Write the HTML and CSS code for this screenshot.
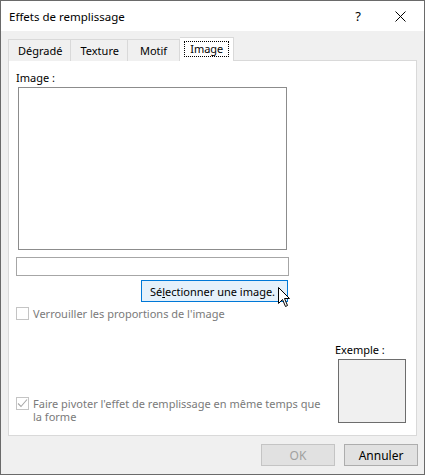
FILE: index.html
```html
<!DOCTYPE html>
<html lang="fr">

<head>
    <meta charset="UTF-8">
    <title>Effets de remplissage</title>
    <link rel="stylesheet" href="styles.css">
</head>

<body>
    <div class="dialog">
        <div class="titlebar">
            <span class="title">Effets de remplissage</span>
            <span class="help">?</span>
            <svg class="close" width="11" height="11" viewBox="0 0 11 11">
                <path d="M0.5 0.5 L10.5 10.5 M10.5 0.5 L0.5 10.5" stroke="#000" stroke-width="1" fill="none" />
            </svg>
        </div>

        <div class="body">
            <div class="tabs">
                <div class="tab tab-first">Dégradé</div>
                <div class="tab">Texture</div>
                <div class="tab tab-wide">Motif</div>
                <div class="tab active"><span class="focus">Image</span></div>
            </div>

            <div class="panel">
                <div class="label">Image :</div>
                <div class="picture"></div>
                <div class="left-col">
                    <div class="field"></div>
                    <div class="pick-row">
                        <div class="pick-btn">Sé<u>l</u>ectionner une image.</div>
                    </div>
                    <div class="check disabled">
                        <span class="box"></span>
                        <span>Verrouiller les proportions de l'image</span>
                    </div>
                </div>

                <div class="bottom-row">
                    <div class="check disabled rotate">
                        <span class="box">
                            <svg width="11" height="11" viewBox="0 0 11 11">
                                <path d="M1 5.5 L4 8.5 L10 1.5" stroke="#a8a8a8" stroke-width="1.1" fill="none" />
                            </svg>
                        </span>
                        <span>Faire pivoter l'effet de remplissage en même temps que la forme</span>
                    </div>
                    <div class="sample">
                        <div class="sample-label">Exemple :</div>
                        <div class="sample-box"></div>
                    </div>
                </div>

                <!-- mouse pointer over the select button -->
                <svg class="pointer" width="13" height="21" viewBox="0 0 13 21">
                    <path d="M0.5 0.5 L0.5 16.5 L4.5 12.5 L7.5 19.5 L9.5 18.5 L6.5 11.5 L11.5 11.5 Z" fill="#fff" stroke="#000" stroke-width="1" />
                </svg>
            </div>

            <div class="footer">
                <div class="btn btn-disabled">OK</div>
                <div class="btn">Annuler</div>
            </div>
        </div>
    </div>
</body>

</html>
```

FILE: styles.css
```css
* {
    box-sizing: border-box;
    margin: 0;
    font-family: "Noto Sans", "Open Sans", sans-serif;
}

body {
    background: #ffffff;
}

.dialog {
    width: 425px;
    height: 475px;
    border: 1px solid #6a6a6a;
    display: flex;
    flex-direction: column;
    font-size: 11px;
    color: #000;
}

.titlebar {
    height: 30px;
    background: #fff;
    display: flex;
    align-items: center;
    padding-left: 8px;
}

.title {
    font-size: 11.5px;
    flex: 1;
}

.help {
    font-size: 13px;
    margin-right: 34px;
}

.close {
    margin-right: 18px;
}

.body {
    flex: 1;
    background: #f0f0f0;
    padding: 6px 6px 0 7px;
    display: flex;
    flex-direction: column;
}

.tabs {
    display: flex;
    align-items: flex-end;
    height: 24px;
    margin-bottom: -1px;
    position: relative;
    z-index: 1;
}

.tab {
    height: 22px;
    border: 1px solid #d9d9d9;
    border-left: none;
    border-bottom: none;
    background: #f0f0f0;
    padding: 0 8px 0 9px;
    display: flex;
    align-items: center;
}

.tab-first {
    border-left: 1px solid #d9d9d9;
}

.tab-wide {
    padding: 0 12px;
}

.tab.active {
    height: 24px;
    background: #fff;
    padding: 0 4px 2px 4px;
}

.focus {
    border: 1px dotted #000;
    padding: 0 5px;
    line-height: 14px;
}

.panel {
    height: 376px;
    background: #fff;
    border: 1px solid #d9d9d9;
    padding: 9px 0 12px 7px;
    display: flex;
    flex-direction: column;
    position: relative;
    width: 409px;
}

.label {
    line-height: 15px;
}

.picture {
    width: 269px;
    height: 163px;
    border: 1px solid #8c8c8c;
    margin: 2px 0 0 2px;
}

.left-col {
    width: 273px;
}

.field {
    height: 19px;
    border: 1px solid #a6a6a6;
    margin-top: 7px;
}

.pick-row {
    display: flex;
    justify-content: flex-end;
    margin-top: 4px;
    padding-right: 1px;
}

.pick-btn {
    width: 147px;
    height: 22px;
    border: 1px solid #0078d7;
    background: #e5f1fb;
    display: flex;
    align-items: center;
    justify-content: center;
    padding-right: 4px;
}

.check {
    display: flex;
    align-items: flex-start;
    gap: 4px;
    margin-top: 5px;
    line-height: 13px;
}

.check .box {
    flex: none;
    width: 13px;
    height: 13px;
    border: 1px solid #c4c4c4;
    background: #fff;
    display: flex;
    align-items: center;
    justify-content: center;
}

.disabled {
    color: #7a7a7a;
}

.bottom-row {
    margin-top: auto;
    display: flex;
    align-items: flex-end;
    justify-content: space-between;
    padding-right: 10px;
}

.rotate {
    width: 310px;
    margin-bottom: 0;
}

.sample-label {
    line-height: 15px;
    margin-bottom: 2px;
}

.sample-box {
    width: 68px;
    height: 64px;
    border: 1px solid #6d6d6d;
    background: #f0f0f0;
    margin-left: 3px;
}

.pointer {
    position: absolute;
    left: 269px;
    top: 226px;
}

.footer {
    display: flex;
    justify-content: flex-end;
    gap: 9px;
    padding: 8px 0 0 0;
}

.btn {
    width: 74px;
    height: 22px;
    border: 1px solid #adadad;
    background: #e1e1e1;
    display: flex;
    align-items: center;
    justify-content: center;
    font-size: 12px;
}

.btn-disabled {
    border-color: #c4c4c4;
    color: #a0a0a0;
}
```
